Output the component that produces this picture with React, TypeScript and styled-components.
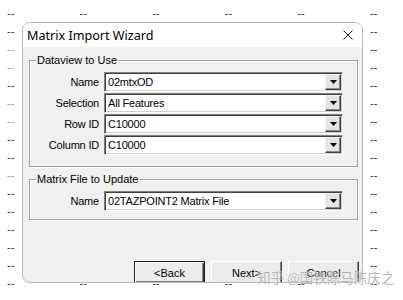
import React from 'react';
import styled, { createGlobalStyle } from 'styled-components';

const GlobalStyle = createGlobalStyle`
  html, body {
    margin: 0;
    padding: 0;
    background: #fff;
  }
`;

const Page = styled.div`
  position: relative;
  width: 403px;
  height: 300px;
  overflow: hidden;
  font-family: "Liberation Sans", Arial, sans-serif;
`;

const DashGrid = styled.div`
  display: grid;
  grid-template-columns: repeat(6, 72.6px);
  grid-auto-rows: 18px;
  padding: 4px 0 0 7px;
  font-size: 11px;
  line-height: 18px;
  color: #333;
`;

const Dash = styled.span<{ $faint?: boolean }>`
  color: ${(p) => (p.$faint ? '#9a9a9a' : '#333')};
`;

const Dialog = styled.div`
  position: absolute;
  left: 22px;
  top: 22px;
  width: 341px;
  height: 261px;
  box-sizing: border-box;
  border: 1px solid #b9b9b9;
  border-radius: 8px;
  overflow: hidden;
  display: flex;
  flex-direction: column;
  background: #f0f0f0;
`;

const TitleBar = styled.div`
  height: 24px;
  flex: none;
  background: #fff;
  display: flex;
  align-items: center;
  justify-content: space-between;
  padding: 0 9px 0 4px;
  font-family: "Noto Sans", "Open Sans", sans-serif;
  font-size: 12.6px;
  color: #000;
`;

const Body = styled.div`
  flex: 1;
  display: flex;
  flex-direction: column;
  padding: 13px 4px 0 6px;
`;

const Group = styled.section<{ $gap: number; $bottom: number }>`
  border: 1px solid #a0a0a0;
  box-shadow: inset 1px 1px 0 #fff, 1px 1px 0 #fff;
  display: flex;
  flex-direction: column;
  gap: 1px;
  padding: 0 14px ${(p) => p.$bottom}px 0;
  margin-top: ${(p) => p.$gap}px;
`;

const Legend = styled.span`
  align-self: flex-start;
  margin: -7px 0 4px 6px;
  padding: 0 2px 0 1px;
  font-size: 11px;
  line-height: 13px;
  color: #000;
  background: #f0f0f0;
`;

const Row = styled.div`
  display: grid;
  grid-template-columns: 69px 1fr;
  column-gap: 5px;
  align-items: center;
  height: 20px;
`;

const Label = styled.span`
  font-size: 11px;
  text-align: right;
  color: #000;
  letter-spacing: -0.2px;
`;

const Combo = styled.div`
  height: 20px;
  box-sizing: border-box;
  display: flex;
  align-items: stretch;
  background: #fff;
  border-top: 1px solid #808080;
  border-left: 1px solid #808080;
  border-bottom: 1px solid #fff;
  border-right: 1px solid #fff;
  box-shadow: inset 1px 1px 0 #404040, inset -1px -1px 0 #d4d0c8;
`;

const ComboText = styled.span`
  flex: 1;
  padding-left: 3px;
  font-size: 11px;
  line-height: 18px;
  color: #000;
  letter-spacing: -0.2px;
`;

const DropButton = styled.span`
  width: 16px;
  margin: 1px 1px 1px 0;
  box-sizing: border-box;
  background: #e4e4e4;
  border-top: 1px solid #f4f4f4;
  border-left: 1px solid #f4f4f4;
  border-bottom: 1px solid #404040;
  border-right: 1px solid #404040;
  box-shadow: inset -1px -1px 0 #8a8a8a;
  display: flex;
  align-items: center;
  justify-content: center;
`;

const ButtonRow = styled.div`
  margin-top: 41px;
  display: flex;
  justify-content: flex-end;
  gap: 6px;
  margin-right: -1px;
`;

const Button = styled.div<{ $default?: boolean }>`
  width: 71px;
  height: 23px;
  flex: none;
  box-sizing: border-box;
  display: flex;
  align-items: center;
  justify-content: center;
  font-size: 11px;
  color: #000;
  background: #ececec;
  border: 1px solid ${(p) => (p.$default ? '#1a1a1a' : 'transparent')};
  border-top-color: ${(p) => (p.$default ? '#1a1a1a' : '#fff')};
  border-left-color: ${(p) => (p.$default ? '#1a1a1a' : '#fff')};
  border-bottom-color: ${(p) => (p.$default ? '#1a1a1a' : '#404040')};
  border-right-color: ${(p) => (p.$default ? '#1a1a1a' : '#404040')};
  box-shadow: ${(p) =>
    p.$default
      ? 'inset 1px 1px 0 #fff, inset -1px -1px 0 #404040, inset -2px -2px 0 #808080'
      : 'inset -1px -1px 0 #808080'};
`;

const Watermark = styled.div`
  position: absolute;
  left: 257px;
  top: 269px;
  font-family: "Noto Sans CJK SC", sans-serif;
  font-size: 13.5px;
  line-height: 17px;
  color: rgba(120, 120, 120, 0.55);
  text-shadow: 0 0 1px rgba(255, 255, 255, 0.9);
  white-space: nowrap;
`;

const Arrow = () => (
  <svg width="7" height="4" viewBox="0 0 7 4">
    <path d="M0 0h7L3.5 4z" fill="#000" />
  </svg>
);

const CloseIcon = () => (
  <svg width="10" height="10" viewBox="0 0 10 10">
    <path d="M0.5 0.5l9 9M9.5 0.5l-9 9" stroke="#1a1a1a" strokeWidth="1" fill="none" />
  </svg>
);

const faint = new Set([12, 30, 36, 18, 54]);

const Field = ({ label, value }: { label: string; value: string }) => (
  <Row>
    <Label>{label}</Label>
    <Combo>
      <ComboText>{value}</ComboText>
      <DropButton>
        <Arrow />
      </DropButton>
    </Combo>
  </Row>
);

const App = () => {
  return (
    <Page>
      <GlobalStyle />
      <DashGrid>
        {Array.from({ length: 96 }, (_, i) => (
          <Dash key={i} $faint={faint.has(i)}>
            --
          </Dash>
        ))}
      </DashGrid>
      <Dialog>
        <TitleBar>
          <span>Matrix Import Wizard</span>
          <CloseIcon />
        </TitleBar>
        <Body>
          <Group $gap={0} $bottom={11}>
            <Legend>Dataview to Use</Legend>
            <Field label="Name" value="02mtxOD" />
            <Field label="Selection" value="All Features" />
            <Field label="Row ID" value="C10000" />
            <Field label="Column ID" value="C10000" />
          </Group>
          <Group $gap={12} $bottom={8}>
            <Legend>Matrix File to Update</Legend>
            <Field label="Name" value="02TAZPOINT2 Matrix File" />
          </Group>
          <ButtonRow>
            <Button $default>&lt;Back</Button>
            <Button>Next&gt;</Button>
            <Button>Cancel</Button>
          </ButtonRow>
        </Body>
      </Dialog>
      <Watermark>知乎 @国铁陈马陈庆之</Watermark>
    </Page>
  );
};

export default App;
